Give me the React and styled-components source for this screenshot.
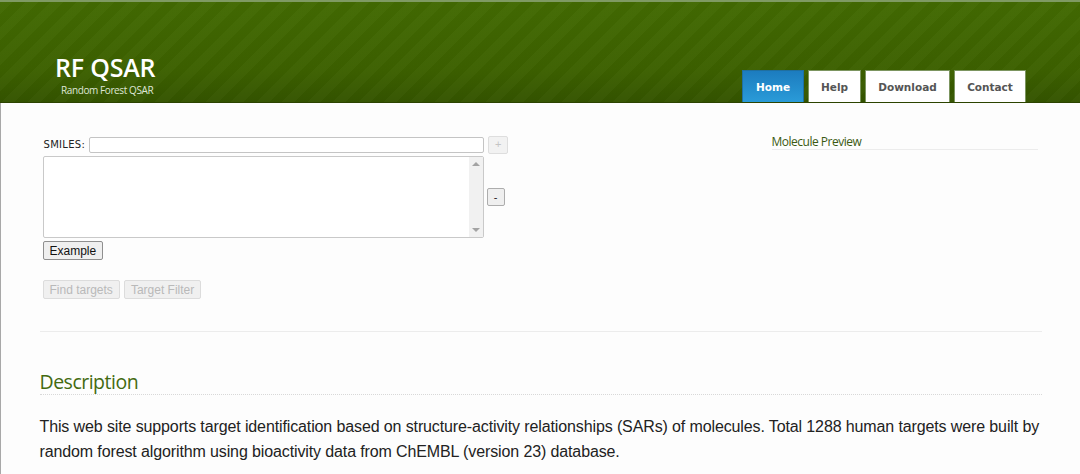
import React, {useState} from "react";
import styled, {createGlobalStyle} from "styled-components";

const GlobalStyle = createGlobalStyle`
  html, body {
    margin: 0;
    padding: 0;
    background: #fdfdfd;
  }
  body {
    font-family: "Liberation Sans", Arial, sans-serif;
  }
`

const Header = styled.header`
  height: 103px;
  box-sizing: border-box;
  border-top: 2px solid #7f9a63;
  border-bottom: 1px solid #2c4400;
  background:
    repeating-linear-gradient(135deg, rgba(255,255,255,0.018) 0 9px, rgba(0,0,0,0.018) 9px 18px),
    linear-gradient(#426a02, #3c6000 70%, #345400);
  display: flex;
  align-items: flex-end;
  justify-content: space-between;
  padding: 0 54px 0 55px;
`

const Brand = styled.div`
  display: flex;
  flex-direction: column;
  padding-bottom: 6px;
`

const Title = styled.h1`
  margin: 0;
  color: #ffffff;
  font-family: "Open Sans", sans-serif;
  font-weight: 600;
  font-size: 25px;
  line-height: 26px;
  letter-spacing: -0.2px;
`

const Subtitle = styled.span`
  margin: 5px 0 0 6px;
  color: #dfe6d6;
  font-family: "Open Sans", sans-serif;
  font-size: 10px;
  letter-spacing: -0.4px;
  line-height: 11px;
`

const Nav = styled.nav`
  display: flex;
  gap: 4px;
`

const Tab = styled.a`
  display: flex;
  align-items: center;
  justify-content: center;
  height: 32px;
  width: ${p => p.$w}px;
  box-sizing: border-box;
  border: 1px solid ${p => p.$active ? '#1f6fa0' : '#7c9560'};
  border-bottom: none;
  background: ${p => p.$active ? 'linear-gradient(#1c7cbf, #2a9bd8)' : '#ffffff'};
  color: ${p => p.$active ? '#ffffff' : '#555555'};
  font-family: "DejaVu Sans", Verdana, sans-serif;
  font-weight: bold;
  font-size: 10.5px;
  text-decoration: none;
  cursor: pointer;
`

const Main = styled.main`
  border-left: 1px solid #a8a8a8;
  min-height: 371px;
`

const Container = styled.div`
  width: 1002px;
  margin: 0 auto;
`

const Columns = styled.div`
  display: flex;
  justify-content: space-between;
  padding-top: 33px;
  height: 188px;
  border-bottom: 1px solid #ececec;
  box-sizing: content-box;
  padding-bottom: 7px;
`

const Form = styled.div`
  display: flex;
  flex-direction: column;
  padding-left: 3px;
`

const SmilesRow = styled.div`
  display: flex;
  align-items: center;
  height: 17px;
`

const Label = styled.label`
  font-family: "DejaVu Sans", Verdana, sans-serif;
  font-size: 10px;
  color: #222;
  margin: 0 4px 0 1px;
  letter-spacing: 0.3px;
`

const TextInput = styled.input`
  width: 395px;
  height: 16px;
  box-sizing: border-box;
  border: 1px solid #c4c4c4;
  border-radius: 2px;
  background: #fff;
  padding: 0 3px;
  margin: 0;
`

const SmallButton = styled.button`
  width: ${p => p.$w || 18}px;
  height: 18px;
  padding: 0;
  margin-left: ${p => p.$ml || 4}px;
  box-sizing: border-box;
  border: 1px solid ${p => p.disabled ? '#dedede' : '#adadad'};
  border-radius: 2px;
  background: ${p => p.disabled ? '#f2f2f2' : '#efefef'};
  color: ${p => p.disabled ? '#c4c4c4' : '#222'};
  font-family: "Liberation Sans", Arial, sans-serif;
  font-size: 11px;
  line-height: 1;
`

const AreaRow = styled.div`
  display: flex;
  align-items: center;
  margin-top: 3px;
`

const AreaWrap = styled.div`
  position: relative;
  width: 441px;
  height: 82px;
`

const TextArea = styled.textarea`
  width: 100%;
  height: 100%;
  box-sizing: border-box;
  border: 1px solid #c9c9c9;
  border-radius: 2px;
  background: #fff;
  resize: none;
  margin: 0;
  padding: 2px 18px 2px 3px;
  font-family: "Liberation Mono", monospace;
  font-size: 12px;
`

const ScrollTrack = styled.div`
  position: absolute;
  top: 1px;
  right: 1px;
  bottom: 1px;
  width: 14px;
  background: #f1f1f1;
  display: flex;
  flex-direction: column;
  justify-content: space-between;
  align-items: center;
  padding: 5px 0;
  box-sizing: border-box;
  pointer-events: none;
`

const Arrow = styled.span`
  width: 0;
  height: 0;
  border-left: 4px solid transparent;
  border-right: 4px solid transparent;
  ${p => p.$down ? 'border-top: 4px solid #a3a3a3;' : 'border-bottom: 4px solid #a3a3a3;'}
`

const Button = styled.button`
  height: 19px;
  padding: 0 6px;
  margin: 0;
  box-sizing: border-box;
  border: 1px solid ${p => p.disabled ? '#dcdcdc' : '#8f8f8f'};
  border-radius: 2px;
  background: ${p => p.disabled ? '#f0f0f0' : '#efefef'};
  color: ${p => p.disabled ? '#b9b9b9' : '#111'};
  font-family: "Liberation Sans", Arial, sans-serif;
  font-size: 12px;
  line-height: 1;
`

const ButtonRow = styled.div`
  display: flex;
  gap: 4px;
  margin-top: ${p => p.$mt}px;
`

const Preview = styled.div`
  width: 266px;
  margin-right: 4px;
  margin-top: -1px;
`

const PreviewTitle = styled.h3`
  margin: 0;
  font-family: "Open Sans", sans-serif;
  font-weight: normal;
  font-size: 12px;
  letter-spacing: -0.5px;
  color: #3b5a12;
  line-height: 14px;
  border-bottom: 1px solid #ececec;
`

const Section = styled.section`
  padding-top: 38px;
`

const Heading = styled.h2`
  margin: 0;
  font-family: "Open Sans", sans-serif;
  font-weight: normal;
  font-size: 19.5px;
  letter-spacing: -0.5px;
  color: #436a10;
  line-height: 24px;
  border-bottom: 1px dotted #d8d8d8;
`

const Paragraph = styled.p`
  margin: 19px 0 0;
  font-family: "Liberation Sans", Arial, sans-serif;
  font-size: 16px;
  letter-spacing: -0.12px;
  line-height: 25px;
  color: #222;
`

const tabs = [
  {name: 'Home', w: 62},
  {name: 'Help', w: 53},
  {name: 'Download', w: 85},
  {name: 'Contact', w: 72},
]

function App() {
  const [smiles, setSmiles] = useState('');
  const [list, setList] = useState('');

  return (
    <>
      <GlobalStyle />
      <Header>
        <Brand>
          <Title>RF QSAR</Title>
          <Subtitle>Random Forest QSAR</Subtitle>
        </Brand>
        <Nav>
          {tabs.map(t => (
            <Tab key={t.name} $w={t.w} $active={t.name === 'Home'}>{t.name}</Tab>
          ))}
        </Nav>
      </Header>
      <Main>
        <Container>
          <Columns>
            <Form>
              <SmilesRow>
                <Label>SMILES:</Label>
                <TextInput value={smiles} onChange={e => setSmiles(e.target.value)} />
                <SmallButton $w={20} disabled>+</SmallButton>
              </SmilesRow>
              <AreaRow>
                <AreaWrap>
                  <TextArea value={list} onChange={e => setList(e.target.value)} />
                  <ScrollTrack>
                    <Arrow />
                    <Arrow $down />
                  </ScrollTrack>
                </AreaWrap>
                <SmallButton $ml={3}>-</SmallButton>
              </AreaRow>
              <ButtonRow $mt={3}>
                <Button>Example</Button>
              </ButtonRow>
              <ButtonRow $mt={20}>
                <Button disabled>Find targets</Button>
                <Button disabled>Target Filter</Button>
              </ButtonRow>
            </Form>
            <Preview>
              <PreviewTitle>Molecule Preview</PreviewTitle>
            </Preview>
          </Columns>
          <Section>
            <Heading>Description</Heading>
            <Paragraph>
              This web site supports target identification based on structure-activity relationships (SARs) of molecules. Total 1288 human targets were built by random forest algorithm using bioactivity data from ChEMBL (version 23) database.
            </Paragraph>
          </Section>
        </Container>
      </Main>
    </>
  );
}

export default App;
